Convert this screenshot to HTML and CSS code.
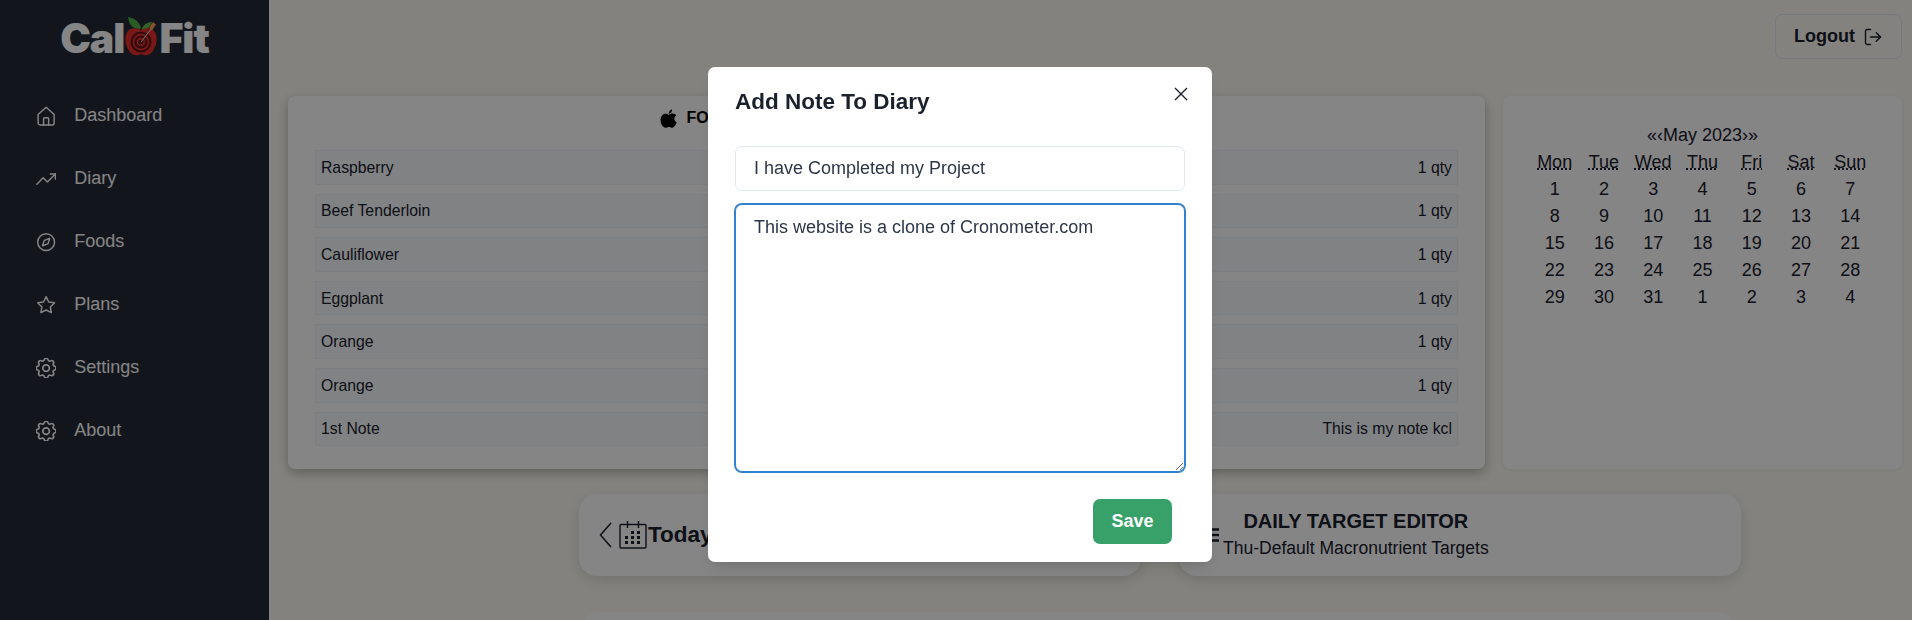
FILE: index.html
```html
<!DOCTYPE html>
<html lang="en">
<head>
    <meta charset="UTF-8">
    <meta name="viewport" content="width=device-width, initial-scale=1.0">
    <title>CaloFit - Diary</title>
    <link rel="stylesheet" href="styles.css">
</head>
<body>
    <aside class="sidebar">
        <div class="logo">
            <span>Cal</span>
            <svg class="logo-apple" viewBox="0 0 32 40">
                <path d="M15 13C9 13 4 10 3 1c6 1 11 4 13 11z" fill="#4fae48"/>
                <path d="M17 13c1-4 5-7 10-7-1 4-5 8-10 8z" fill="#5fbb4c"/>
                <path d="M16 14c4-2 10-3 13 1 4 5 3 13 0 18-2 4-6 7-10 6-2-1-4-1-6 0-4 1-8-2-10-6C0 28-1 20 3 15c3-4 9-3 13-1z" fill="#ea2f2f"/>
                <circle cx="16" cy="26" r="10.500" fill="#5e1616"/>
                <circle cx="16" cy="26" r="7.500" fill="none" stroke="#ea2f2f" stroke-width="1.800"/>
                <circle cx="16" cy="26" r="3.500" fill="none" stroke="#ea2f2f" stroke-width="1.800"/>
                <path d="M16 26l11-14" stroke="#e0e0e0" stroke-width="1"/>
                <path d="M24 12l4-6 3 2.500-4 6z" fill="#ff9a55"/>
            </svg>
            <span>Fit</span>
        </div>
        <nav class="nav">
            <a class="nav-item" href="#">
                <svg class="nav-icon" viewBox="0 0 24 24"><path d="M2.500 10L12 1.500l9.500 8.500v10a2.500 2.500 0 0 1-2.500 2.500H5A2.500 2.500 0 0 1 2.500 20z"/><path d="M9 22.500V15a1 1 0 0 1 1-1h4a1 1 0 0 1 1 1v7.500"/></svg>
                Dashboard
            </a>
            <a class="nav-item" href="#">
                <svg class="nav-icon" viewBox="0 0 24 24"><path d="M23 6l-9.500 9.500-5-5L1 18"/><path d="M17 6h6v6"/></svg>
                Diary
            </a>
            <a class="nav-item" href="#">
                <svg class="nav-icon" viewBox="0 0 24 24"><circle cx="12" cy="12" r="10"/><path d="M16.240 7.760l-2.120 6.360-6.360 2.120 2.120-6.360z"/></svg>
                Foods
            </a>
            <a class="nav-item" href="#">
                <svg class="nav-icon" viewBox="0 0 24 24"><path d="M12 2l3.090 6.260L22 9.270l-5 4.870 1.180 6.880L12 17.770l-6.180 3.250L7 14.140 2 9.270l6.910-1.010z"/></svg>
                Plans
            </a>
            <a class="nav-item" href="#">
                <svg class="nav-icon" viewBox="2.800 2.800 18.400 18.400"><path class="thin" d="M10.325 4.317c.426-1.756 2.924-1.756 3.350 0a1.724 1.724 0 0 0 2.573 1.066c1.543-.94 3.310.826 2.370 2.370a1.724 1.724 0 0 0 1.065 2.572c1.756.426 1.756 2.924 0 3.350a1.724 1.724 0 0 0-1.066 2.573c.94 1.543-.826 3.310-2.370 2.370a1.724 1.724 0 0 0-2.572 1.065c-.426 1.756-2.924 1.756-3.350 0a1.724 1.724 0 0 0-2.573-1.066c-1.543.94-3.310-.826-2.370-2.370a1.724 1.724 0 0 0-1.065-2.572c-1.756-.426-1.756-2.924 0-3.350a1.724 1.724 0 0 0 1.066-2.573c-.94-1.543.826-3.310 2.370-2.370 1 .608 2.296.07 2.572-1.065z"/><circle class="thin" cx="12" cy="12" r="3"/></svg>
                Settings
            </a>
            <a class="nav-item" href="#">
                <svg class="nav-icon" viewBox="2.800 2.800 18.400 18.400"><path class="thin" d="M10.325 4.317c.426-1.756 2.924-1.756 3.350 0a1.724 1.724 0 0 0 2.573 1.066c1.543-.94 3.310.826 2.370 2.370a1.724 1.724 0 0 0 1.065 2.572c1.756.426 1.756 2.924 0 3.350a1.724 1.724 0 0 0-1.066 2.573c.94 1.543-.826 3.310-2.370 2.370a1.724 1.724 0 0 0-2.572 1.065c-.426 1.756-2.924 1.756-3.350 0a1.724 1.724 0 0 0-2.573-1.066c-1.543.94-3.310-.826-2.370-2.370a1.724 1.724 0 0 0-1.065-2.572c-1.756-.426-1.756-2.924 0-3.350a1.724 1.724 0 0 0 1.066-2.573c-.94-1.543.826-3.310 2.370-2.370 1 .608 2.296.07 2.572-1.065z"/><circle class="thin" cx="12" cy="12" r="3"/></svg>
                About
            </a>
        </nav>
    </aside>

    <main class="main">
        <header class="topbar">
            <button class="logout">
                Logout
                <svg class="logout-icon" viewBox="0 0 24 24"><path d="M9 21H5a2 2 0 0 1-2-2V5a2 2 0 0 1 2-2h4"/><path d="M16 17l5-5-5-5"/><path d="M21 12H9"/></svg>
            </button>
        </header>

        <section class="top-row">
            <div class="card food-card">
                <h2 class="food-title">
                    <svg class="apple-icon" viewBox="0 0 18 20"><path d="M9.200 5C9.200 2.800 10.600.8 12.800.2c.2 2.400-1.200 4.400-3.600 4.800z"/><path d="M9 6c1.500-.9 3-1.400 4.500-1.300 1.700.1 3 .8 3.800 2-1.500 1-2.200 2.200-2.100 3.800.1 1.700 1 2.900 2.500 3.600-.9 2.700-2.800 5.700-4.700 5.700-1.300 0-2-.8-3.500-.8s-2.300.8-3.500.8C3 19.800.6 15.400.6 11.700.6 7.500 3 4.900 5.700 4.900c1.300 0 2.400.6 3.300 1.100z"/></svg>
                    FOOD
                </h2>
                <div class="rows">
                    <div class="row"><span>Raspberry</span><span>1 qty</span></div>
                    <div class="row"><span>Beef Tenderloin</span><span>1 qty</span></div>
                    <div class="row"><span>Cauliflower</span><span>1 qty</span></div>
                    <div class="row"><span>Eggplant</span><span>1 qty</span></div>
                    <div class="row"><span>Orange</span><span>1 qty</span></div>
                    <div class="row"><span>Orange</span><span>1 qty</span></div>
                    <div class="row"><span>1st Note</span><span>This is my note kcl</span></div>
                </div>
            </div>

            <div class="card calendar-card">
                <div class="calendar">
                    <div class="cal-nav">«‹May 2023›»</div>
                    <div class="cal-grid">
                        <abbr title="Monday">Mon</abbr><abbr title="Tuesday">Tue</abbr><abbr title="Wednesday">Wed</abbr><abbr title="Thursday">Thu</abbr><abbr title="Friday">Fri</abbr><abbr title="Saturday">Sat</abbr><abbr title="Sunday">Sun</abbr>
                        <span>1</span><span>2</span><span>3</span><span>4</span><span>5</span><span>6</span><span>7</span>
                        <span>8</span><span>9</span><span>10</span><span>11</span><span>12</span><span>13</span><span>14</span>
                        <span>15</span><span>16</span><span>17</span><span>18</span><span>19</span><span>20</span><span>21</span>
                        <span>22</span><span>23</span><span>24</span><span>25</span><span>26</span><span>27</span><span>28</span>
                        <span>29</span><span>30</span><span>31</span><span>1</span><span>2</span><span>3</span><span>4</span>
                    </div>
                </div>
            </div>
        </section>

        <section class="bottom-row">
            <div class="pill pill-today">
                <svg class="chevron" viewBox="0 0 13 26"><path d="M12 1L1.500 13 12 25"/></svg>
                <svg class="cal-icon" viewBox="0 0 28 29">
                    <path class="cal-outline" d="M2 4.500h24a1 1 0 0 1 1 1V27a1 1 0 0 1-1 1H2a1 1 0 0 1-1-1V5.500a1 1 0 0 1 1-1zM8.500 1v7M19.500 1v7"/>
                    <g class="cal-dots">
                        <rect x="12" y="11" width="3" height="3"/><rect x="18" y="11" width="3" height="3"/>
                        <rect x="6" y="16" width="3" height="3"/><rect x="12" y="16" width="3" height="3"/><rect x="18" y="16" width="3" height="3"/>
                        <rect x="6" y="21" width="3" height="3"/><rect x="12" y="21" width="3" height="3"/><rect x="18" y="21" width="3" height="3"/>
                    </g>
                </svg>
                <span class="today">Today</span>
            </div>
            <div class="pill pill-target">
                <svg class="bars" viewBox="0 0 20 14"><path d="M0 1.500h20M0 7h20M0 12.500h20"/></svg>
                <div class="target-text">
                    <div class="target-title">DAILY TARGET EDITOR</div>
                    <div class="target-sub">Thu-Default Macronutrient Targets</div>
                </div>
            </div>
        </section>

        <section class="card next-card"></section>
    </main>

    <div class="overlay"></div>
    <div class="modal">
        <h3 class="modal-title">Add Note To Diary</h3>
        <button class="modal-close">
            <svg viewBox="0 0 14 14"><path d="M1 1l12 12M13 1L1 13"/></svg>
        </button>
        <div class="modal-body">
            <input class="field" type="text" value="I have Completed my Project">
            <textarea class="field note">This website is a clone of Cronometer.com</textarea>
        </div>
        <div class="modal-footer">
            <button class="save">Save</button>
        </div>
    </div>
</body>
</html>
```

FILE: styles.css
```css
* {
    box-sizing: border-box;
}
html, body {
    height: 100%;
}
body {
    margin: 0;
    display: flex;
    overflow: hidden;
    background-color: #fbfaf3;
    color: #1a202c;
    font-family: "Liberation Sans", Arial, sans-serif;
    font-size: 18px;
    line-height: 27px;
}

/* --- Sidebar --- */
.sidebar {
    width: 269px;
    flex-shrink: 0;
    background-color: #262a38;
    color: #fff;
}
.logo {
    display: flex;
    align-items: flex-end;
    justify-content: center;
    height: 76px;
    padding-bottom: 15px;
    font-family: Inter, sans-serif;
    font-size: 41px;
    line-height: 46px;
    font-weight: 900;
    letter-spacing: -1px;
    color: #fff;
}
.logo-apple {
    width: 32px;
    height: 40px;
    margin: 0 2px 5px 1px;
}
.nav {
    padding-top: 8.3px;
}
.nav-item {
    display: flex;
    align-items: center;
    height: 63px;
    padding-left: 36px;
    gap: 18px;
    color: #fff;
    text-decoration: none;
}
.nav-icon {
    width: 20.25px;
    height: 20.25px;
    fill: none;
    stroke: #fff;
    stroke-width: 1.7;
    stroke-linecap: round;
    stroke-linejoin: round;
}
.nav-icon .thin {
    stroke-width: 1.5;
}

/* --- Main area --- */
.main {
    flex: 1;
    min-width: 0;
    height: 100%;
    overflow: hidden;
    padding: 14px 10px 0 19px;
}
.topbar {
    display: flex;
    justify-content: flex-end;
    height: 82px;
}
.logout {
    display: flex;
    align-items: center;
    gap: 8px;
    height: 45px;
    padding: 0 18px;
    background: transparent;
    border: 1px solid #e2e8f0;
    border-radius: 7px;
    color: #1a202c;
    font: bold 18px "Liberation Sans", Arial, sans-serif;
}
.logout-icon {
    width: 20px;
    height: 20px;
    fill: none;
    stroke: #1a202c;
    stroke-width: 1.7;
    stroke-linecap: round;
    stroke-linejoin: round;
}
.card {
    background-color: #fff;
    border-radius: 7px;
}
.top-row {
    display: flex;
    gap: 18px;
    height: 372.5px;
}

/* --- Food list --- */
.food-card {
    width: 1197px;
    padding: 14px 27px 0;
    box-shadow: 0 4px 12px rgba(0, 0, 0, 0.28);
}
.food-title {
    display: flex;
    align-items: center;
    gap: 10px;
    width: 454px;
    height: 18px;
    margin: -1px auto 23px;
    color: #000;
    font-size: 16px;
    line-height: 18px;
}
.apple-icon {
    width: 17px;
    height: 19px;
    fill: #000;
}
.rows {
    display: flex;
    flex-direction: column;
    gap: 9px;
}
.row {
    display: flex;
    align-items: center;
    justify-content: space-between;
    height: 34.6px;
    padding: 0 5px;
    background-color: #f7fafc;
    border: 1px solid #edf2f7;
    font-size: 15.75px;
}

/* --- Calendar --- */
.calendar-card {
    width: 399px;
    padding-top: 26px;
    box-shadow: 0 1px 4px rgba(0, 0, 0, 0.08);
}
.calendar {
    width: 345px;
    margin: 0 auto;
    text-align: center;
}
.cal-grid {
    display: grid;
    grid-template-columns: repeat(7, 1fr);
}

/* --- Bottom row --- */
.bottom-row {
    display: grid;
    grid-template-columns: 562px 562px;
    gap: 38px;
    width: 1162px;
    margin: 25.5px 0 0 291px;
}
.pill {
    display: flex;
    align-items: center;
    height: 81.5px;
    background-color: #fff;
    border-radius: 18px;
    box-shadow: 0 4px 14px rgba(0, 0, 0, 0.14);
}
.pill-today {
    padding-left: 20px;
}
.chevron {
    width: 13px;
    height: 26px;
    fill: none;
    stroke: #1a202c;
    stroke-width: 1.5;
}
.cal-icon {
    width: 28px;
    height: 29px;
    margin: -1px 1px 0 7px;
}
.cal-outline {
    fill: none;
    stroke: #1a202c;
    stroke-width: 1.4;
}
.cal-dots {
    fill: #1a202c;
}
.today {
    font-size: 22.5px;
    font-weight: bold;
}
.pill-target {
    padding-left: 20px;
}
.bars {
    width: 20px;
    height: 14px;
    fill: none;
    stroke: #1a202c;
    stroke-width: 2.6;
}
.target-text {
    margin-left: 4px;
    text-align: center;
}
.target-title {
    font-size: 20px;
    font-weight: bold;
}
.target-sub {
    font-size: 17.55px;
}
.next-card {
    width: 1153px;
    height: 80px;
    margin: 36.5px 0 0 294px;
    border-radius: 18px;
}

/* --- Modal --- */
.overlay {
    position: fixed;
    inset: 0;
    background-color: rgba(0, 0, 0, 0.48);
}
.modal {
    position: fixed;
    top: 67px;
    left: 708px;
    width: 504px;
    background-color: #fff;
    border-radius: 7px;
    box-shadow: 0 10px 15px -3px rgba(0, 0, 0, 0.1), 0 4px 6px -2px rgba(0, 0, 0, 0.05);
}
.modal-title {
    margin: 0;
    padding: 18px 27px;
    font-size: 22.5px;
    line-height: 33.75px;
    font-weight: bold;
}
.modal-close {
    position: absolute;
    top: 9px;
    right: 13px;
    width: 36px;
    height: 36px;
    padding: 0;
    background: none;
    border: 0;
}
.modal-close svg {
    display: block;
    width: 14px;
    height: 14px;
    margin: 11px;
    fill: none;
    stroke: #1a202c;
    stroke-width: 1.4;
}
.modal-body {
    display: flex;
    flex-direction: column;
    gap: 13.5px;
    padding: 9px 27px;
}
.field {
    display: block;
    width: 100%;
    height: 45px;
    padding: 0 18px;
    background: #fff;
    border: 1px solid #e2e8f0;
    border-radius: 7px;
    color: #2d3748;
    font: 18px/27px "Liberation Sans", Arial, sans-serif;
    outline: none;
}
.note {
    height: 267.5px;
    padding: 9px 18px;
    border-color: #3182ce;
    box-shadow: 0 0 0 1px #3182ce;
}
.modal-footer {
    display: flex;
    justify-content: flex-end;
    padding: 18px 40.5px 18px 27px;
}
.save {
    height: 45px;
    padding: 0 18px;
    background-color: #38a169;
    border: 0;
    border-radius: 7px;
    color: #fff;
    font: bold 18px "Liberation Sans", Arial, sans-serif;
}
```
